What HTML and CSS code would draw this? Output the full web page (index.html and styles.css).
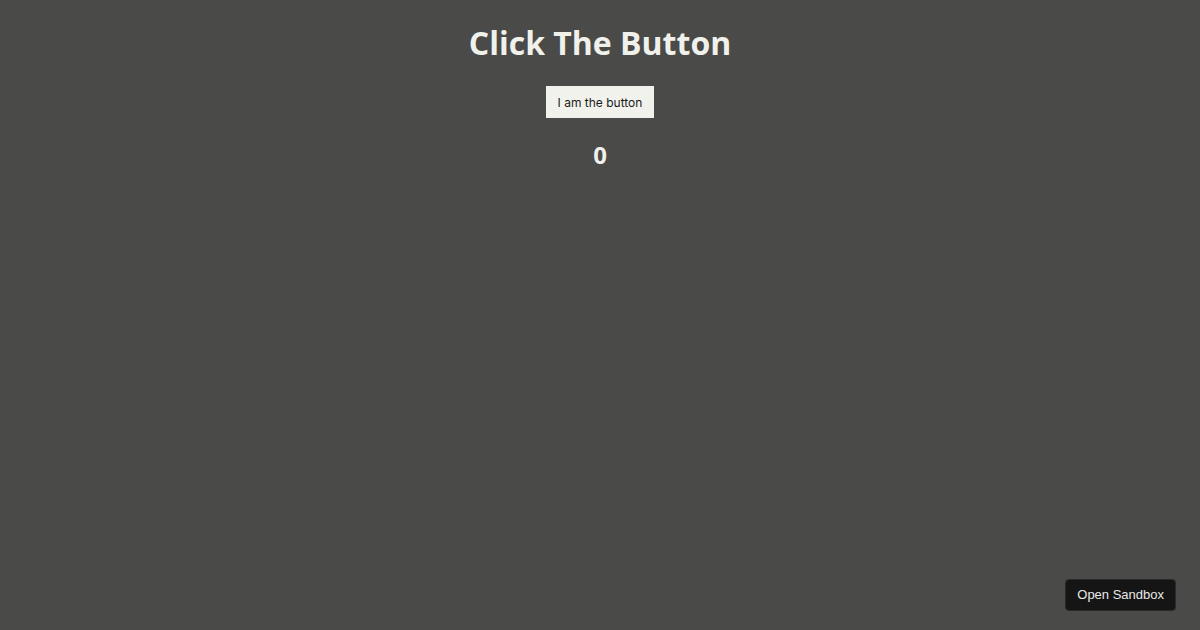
FILE: index.html
```html
<!DOCTYPE html>
<html lang="en">
<head>
  <meta charset="UTF-8">
  <meta name="viewport" content="width=device-width, initial-scale=1.0">
  <title>Click The Button</title>
  <link rel="stylesheet" href="styles.css">
</head>
<body>
  <div class="app">
    <h1 class="title">Click The Button</h1>
    <button class="click-button">I am the button</button>
    <h2 class="count">0</h2>
  </div>

  <a class="sandbox-link" href="#">Open Sandbox</a>
</body>
</html>
```

FILE: styles.css
```css
body {
  margin: 0;
  background-color: #4a4a48;
  color: #f1f1ec;
  font-family: 'Open Sans', sans-serif;
  height: 100vh;
}
.app {
  display: flex;
  flex-direction: column;
  align-items: center;
  padding-top: 22px;
}
.title {
  margin: 0;
  font-size: 32px;
  font-weight: 700;
  line-height: 42px;
}
.click-button {
  margin-top: 22px;
  padding: 0 12px;
  height: 32px;
  background-color: #f2f2ec;
  color: #1a1a1a;
  border: none;
  border-radius: 0;
  font-family: 'Inter', sans-serif;
  font-size: 12px;
  cursor: pointer;
}
.count {
  margin: 21px 0 0;
  font-size: 24px;
  font-weight: 700;
  line-height: 32px;
}
.sandbox-link {
  position: fixed;
  right: 24px;
  bottom: 19px;
  padding: 0 11px;
  height: 30px;
  line-height: 30px;
  background-color: #151515;
  color: #e8e8e8;
  border: 1px solid #2a2a2a;
  border-radius: 4px;
  font-family: 'Liberation Sans', sans-serif;
  font-size: 13px;
  text-decoration: none;
}
```
